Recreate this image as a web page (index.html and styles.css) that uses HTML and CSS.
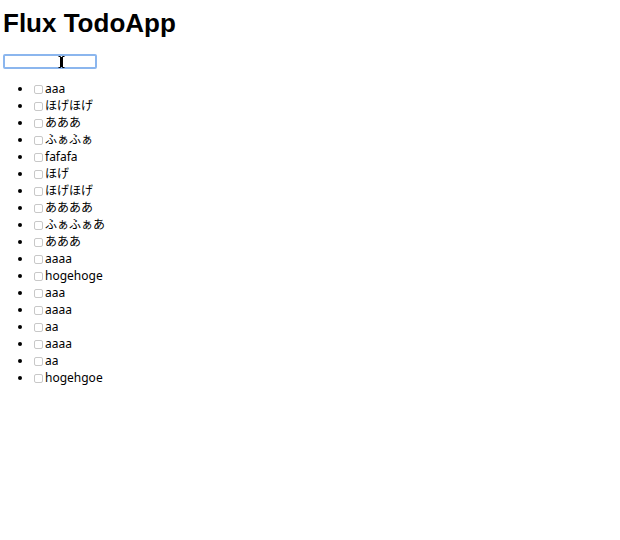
FILE: index.html
```html
<!DOCTYPE html>
<html>
<head>
  <meta charset="UTF-8">
  <link rel="stylesheet" href="styles.css">
  <title>Flux TodoApp</title>
</head>
<body>
  <div class="app">
    <h1 class="title">Flux TodoApp</h1>
    <div class="new-todo">
      <input type="text" class="todo-input">
      <svg class="ibeam" width="7" height="12" viewBox="0 0 7 12">
        <path d="M0.5 0.5h2v11h-2M6.5 0.5h-2v11h2M3.5 1v10" fill="none" stroke="#000" stroke-width="1"/>
      </svg>
    </div>
    <ul class="todo-list">
      <li><input type="checkbox" class="check">aaa</li>
      <li><input type="checkbox" class="check">ほげほげ</li>
      <li><input type="checkbox" class="check">あああ</li>
      <li><input type="checkbox" class="check">ふぁふぁ</li>
      <li><input type="checkbox" class="check">fafafa</li>
      <li><input type="checkbox" class="check">ほげ</li>
      <li><input type="checkbox" class="check">ほげほげ</li>
      <li><input type="checkbox" class="check">ああああ</li>
      <li><input type="checkbox" class="check">ふぁふぁあ</li>
      <li><input type="checkbox" class="check">あああ</li>
      <li><input type="checkbox" class="check">aaaa</li>
      <li><input type="checkbox" class="check">hogehoge</li>
      <li><input type="checkbox" class="check">aaa</li>
      <li><input type="checkbox" class="check">aaaa</li>
      <li><input type="checkbox" class="check">aa</li>
      <li><input type="checkbox" class="check">aaaa</li>
      <li><input type="checkbox" class="check">aa</li>
      <li><input type="checkbox" class="check">hogehgoe</li>
    </ul>
  </div>
</body>
</html>
```

FILE: styles.css
```css
body {
  margin: 0;
  background: #fff;
  color: #000;
  font-family: "Liberation Sans", "Noto Sans CJK JP", sans-serif;
}

.app {
  padding-left: 3px;
}

.title {
  margin: 9px 0 16px 0;
  font-size: 26px;
  font-weight: bold;
  line-height: 29px;
}

.new-todo {
  position: relative;
  width: 94px;
  height: 15px;
}

.todo-input {
  display: block;
  box-sizing: border-box;
  width: 94px;
  height: 15px;
  margin: 0;
  padding: 0;
  border: 2px solid #8bb6ee;
  border-radius: 2px;
  background: #fff;
  outline: none;
}

.ibeam {
  position: absolute;
  left: 55px;
  top: 2px;
}

.todo-list {
  margin: 11px 0 0 0;
  padding-left: 30px;
  font-family: "Noto Sans", "Noto Sans CJK JP", sans-serif;
  font-size: 12px;
  line-height: 17px;
}

.todo-list li {
  height: 17px;
}

.check {
  -webkit-appearance: none;
  appearance: none;
  box-sizing: border-box;
  width: 9px;
  height: 9px;
  margin: 0 2px 0 1px;
  border: 1px solid #c8c8c8;
  border-radius: 2px;
  background: #fff;
  vertical-align: -1px;
}
```
